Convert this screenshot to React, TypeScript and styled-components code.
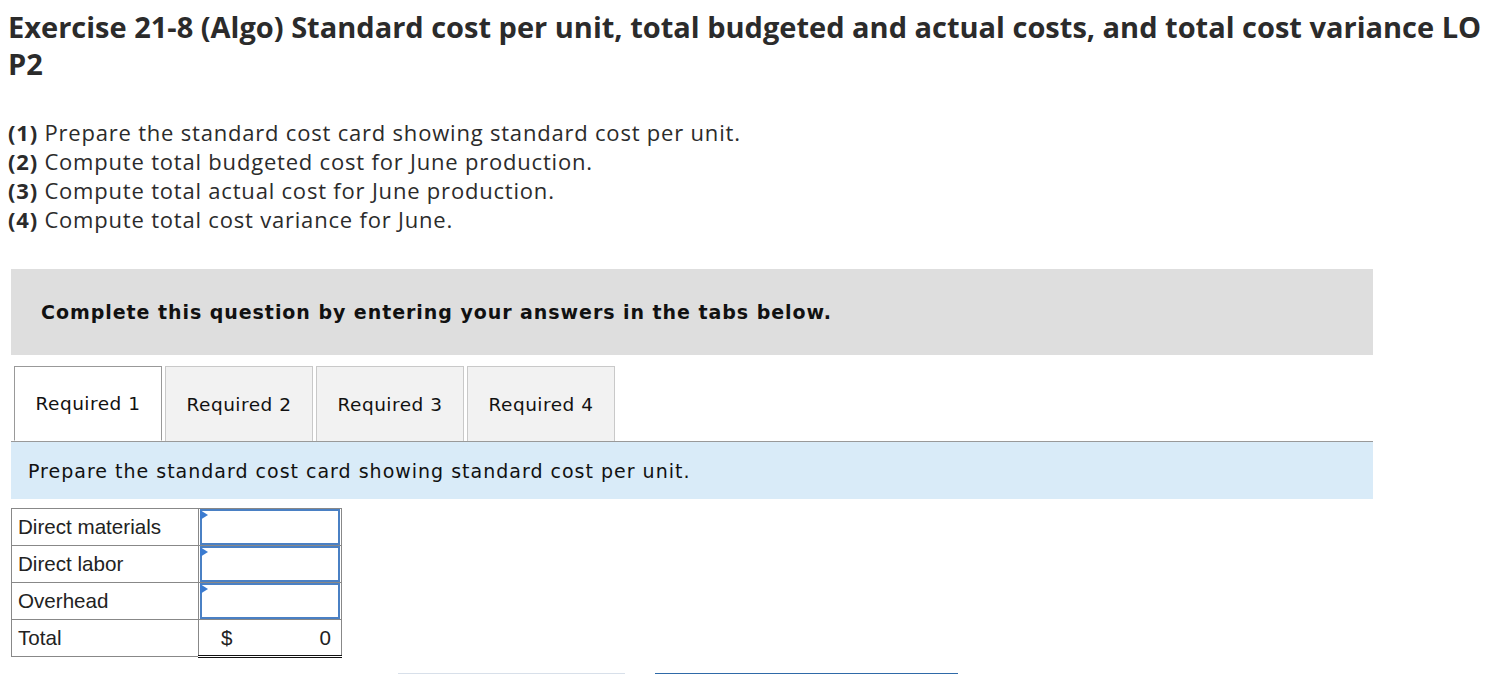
import React from "react";
import styled, { createGlobalStyle } from "styled-components";

const Global = createGlobalStyle`
  body { margin: 8px; background: #fff; }
`;

const Page = styled.div`
  width: 1496px;
`;

const Title = styled.h1`
  margin: 0;
  font-family: "Open Sans", Lato, sans-serif;
  font-weight: 700;
  font-size: 29px;
  line-height: 37px;
  color: #2b2b2b;
`;

const Steps = styled.div`
  margin-top: 36px;
  font-family: "Open Sans", Lato, sans-serif;
  font-size: 22px;
  letter-spacing: 0.8px;
  line-height: 29px;
  color: #2b2b2b;
`;

const Step = styled.div`
  b { font-weight: 700; }
`;

const Notice = styled.div`
  margin: 35px 0 0 3px;
  width: 1362px;
  height: 86px;
  background: #dedede;
  display: flex;
  align-items: center;
  padding-left: 30px;
  box-sizing: border-box;
  font-family: "DejaVu Sans", Verdana, sans-serif;
  font-weight: 700;
  font-size: 19px;
  letter-spacing: 0.95px;
  color: #111;
`;

const TabBar = styled.div`
  margin: 11px 0 0 3px;
  width: 1362px;
  padding-left: 3px;
  box-sizing: border-box;
  display: flex;
  gap: 3px;
  border-bottom: 1px solid #999;
`;

const Tab = styled.div<{ $active?: boolean }>`
  width: 148px;
  height: 75px;
  box-sizing: border-box;
  display: flex;
  align-items: center;
  justify-content: center;
  font-family: "DejaVu Sans", Verdana, sans-serif;
  font-size: 18.5px;
  letter-spacing: 0.5px;
  color: #111;
  background: ${(p) => (p.$active ? "#fff" : "#f2f2f2")};
  border: 1px solid ${(p) => (p.$active ? "#999" : "#c9c9c9")};
  border-bottom: ${(p) => (p.$active ? "1px solid #fff" : "none")};
  margin-bottom: ${(p) => (p.$active ? "-1px" : "0")};
`;

const Prompt = styled.div`
  margin-left: 3px;
  width: 1362px;
  height: 57px;
  background: #d9ebf8;
  display: flex;
  align-items: center;
  padding-left: 17px;
  box-sizing: border-box;
  font-family: "DejaVu Sans", Verdana, sans-serif;
  font-size: 19px;
  letter-spacing: 1px;
  color: #111;
`;

const Table = styled.table`
  margin: 9px 0 0 3px;
  border-collapse: collapse;
  font-family: "Liberation Sans", Arial, sans-serif;
  font-size: 20.6px;
  color: #222;
`;

const Label = styled.td`
  width: 187px;
  height: 37px;
  padding: 0 0 0 6px;
  box-sizing: border-box;
  border: 1px solid #888;
`;

const ValueCell = styled.td`
  width: 143px;
  height: 37px;
  padding: 0;
  box-sizing: border-box;
  border: 1px solid #888;
  position: relative;
`;

const InputBox = styled.div`
  position: absolute;
  inset: 0 1px 0 1px;
  border: 2px solid #4a80c4;
  background: #fff;
`;

const Flag = styled.span`
  position: absolute;
  left: 1px;
  top: 1px;
  width: 0;
  height: 0;
  border-top: 5px solid transparent;
  border-bottom: 5px solid transparent;
  border-left: 8px solid #3b7bd0;
`;

const TotalCell = styled.td`
  width: 143px;
  height: 37px;
  padding: 0 10px 0 22px;
  box-sizing: border-box;
  border-left: 1px solid #888;
  border-right: 1px solid #888;
  border-top: 1px solid #888;
  border-bottom: 3px double #111;
`;

const TotalInner = styled.div`
  display: flex;
  justify-content: space-between;
  align-items: center;
`;

const NavRow = styled.div`
  margin: 15px 0 0 390px;
  display: flex;
  gap: 30px;
`;

const NavButton = styled.div<{ $primary?: boolean }>`
  width: ${(p) => (p.$primary ? "303px" : "227px")};
  height: 0;
  border-top: 2px solid ${(p) => (p.$primary ? "#2f6aa8" : "#d8e0ea")};
  background: #fff;
`;

const rows = ["Direct materials", "Direct labor", "Overhead"];

export default function App() {
  return (
    <Page>
      <Global />
      <Title>
        Exercise 21-8 (Algo) Standard cost per unit, total budgeted and actual costs, and total cost variance LO P2
      </Title>
      <Steps>
        <Step><b>(1)</b> Prepare the standard cost card showing standard cost per unit.</Step>
        <Step><b>(2)</b> Compute total budgeted cost for June production.</Step>
        <Step><b>(3)</b> Compute total actual cost for June production.</Step>
        <Step><b>(4)</b> Compute total cost variance for June.</Step>
      </Steps>
      <Notice>Complete this question by entering your answers in the tabs below.</Notice>
      <TabBar>
        <Tab $active>Required 1</Tab>
        <Tab>Required 2</Tab>
        <Tab>Required 3</Tab>
        <Tab>Required 4</Tab>
      </TabBar>
      <Prompt>Prepare the standard cost card showing standard cost per unit.</Prompt>
      <Table>
        <tbody>
          {rows.map((r) => (
            <tr key={r}>
              <Label>{r}</Label>
              <ValueCell>
                <InputBox />
                <Flag />
              </ValueCell>
            </tr>
          ))}
          <tr>
            <Label>Total</Label>
            <TotalCell>
              <TotalInner>
                <span>$</span>
                <span>0</span>
              </TotalInner>
            </TotalCell>
          </tr>
        </tbody>
      </Table>
      <NavRow>
        <NavButton />
        <NavButton $primary />
      </NavRow>
    </Page>
  );
}
